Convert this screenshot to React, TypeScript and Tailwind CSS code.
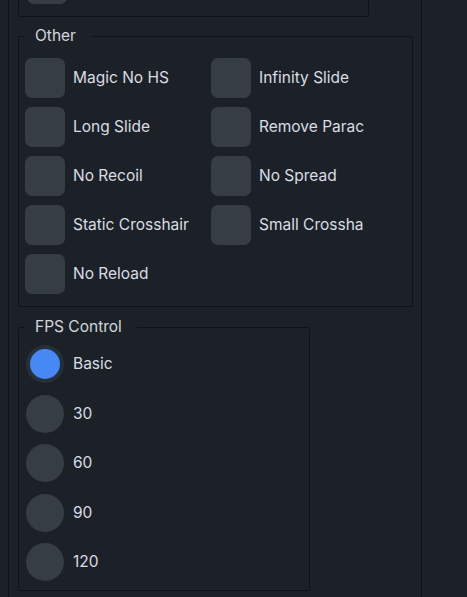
import { useState } from 'react'

// 화면에 보이는 그대로의 라벨 (오른쪽 열은 패널 폭에서 잘려 보임)
const OTHER_OPTIONS = [
  'Magic No HS',
  'Infinity Slide',
  'Long Slide',
  'Remove Parac',
  'No Recoil',
  'No Spread',
  'Static Crosshair',
  'Small Crossha',
  'No Reload',
]

const FPS_OPTIONS = ['Basic', '30', '60', '90', '120']

const Checkbox = ({ label, checked, onToggle }: { label: string; checked: boolean; onToggle: () => void }) => (
  <button onClick={onToggle} className="flex h-[40px] items-center gap-[8px] text-left">
    <span
      className={`h-[40px] w-[40px] shrink-0 rounded-[7px] ${checked ? 'bg-[#4688f4]' : 'bg-[#363d45]'}`}
    />
    <span className="whitespace-nowrap text-[15.5px] text-[#d9dde2]">{label}</span>
  </button>
)

const Radio = ({ label, selected, onSelect }: { label: string; selected: boolean; onSelect: () => void }) => (
  <button onClick={onSelect} className="flex h-[40px] items-center gap-[8px] text-left">
    <span className="flex h-[40px] w-[40px] shrink-0 items-center justify-center">
      {selected ? (
        <span className="flex h-[38px] w-[38px] items-center justify-center rounded-full bg-[#26303b]">
          <span className="h-[30px] w-[30px] rounded-full bg-[#4688f4]" />
        </span>
      ) : (
        <span className="h-[38px] w-[38px] rounded-full bg-[#363d45]" />
      )}
    </span>
    <span className="text-[15.5px] text-[#d9dde2]">{label}</span>
  </button>
)

const App = () => {
  const [checked, setChecked] = useState<Record<string, boolean>>({})
  const [fps, setFps] = useState('Basic')

  const toggle = (key: string) => setChecked(prev => ({ ...prev, [key]: !prev[key] }))

  return (
    <div
      className="flex h-[597px] w-[467px] overflow-hidden bg-[#1c2128]"
      style={{ fontFamily: 'Inter, "Noto Sans", sans-serif' }}
    >
      <div className="w-[8px] shrink-0" />
      {/* 메인 패널 */}
      <div className="flex w-[414px] shrink-0 flex-col border-x-[1.5px] border-[#0f1318] pl-[9px] pr-[8px]">
        {/* 위쪽 그룹 (잘림) */}
        <div className="-mt-[50px] mr-[44px] rounded-b-[2px] border border-[#0f1318] px-[8px] pt-[13px] pb-[12px]">
          <Checkbox label="" checked={false} onToggle={() => {}} />
        </div>

        {/* Other */}
        <fieldset className="mt-[7px] rounded-[2px] border border-[#0f1318] pl-[6px] pt-[10px] pb-[12px]">
          <legend className="pl-[10px] pr-[16px] text-[15.5px] leading-[24px] text-[#d2d6db]">Other</legend>
          <div className="grid grid-cols-[186px_1fr] gap-y-[9px]">
            {OTHER_OPTIONS.map(opt => (
              <Checkbox key={opt} label={opt} checked={!!checked[opt]} onToggle={() => toggle(opt)} />
            ))}
          </div>
        </fieldset>

        {/* FPS Control */}
        <fieldset className="mt-[8px] w-[292px] rounded-[2px] border border-[#0f1318] pl-[6px] pt-[5px] pb-[8px]">
          <legend className="pl-[10px] pr-[15px] text-[15.5px] leading-[24px] text-[#d2d6db]">FPS Control</legend>
          <div className="flex flex-col gap-[9.5px]">
            {FPS_OPTIONS.map(opt => (
              <Radio key={opt} label={opt} selected={fps === opt} onSelect={() => setFps(opt)} />
            ))}
          </div>
        </fieldset>
      </div>
      <div className="flex-1" />
    </div>
  )
}

export default App
